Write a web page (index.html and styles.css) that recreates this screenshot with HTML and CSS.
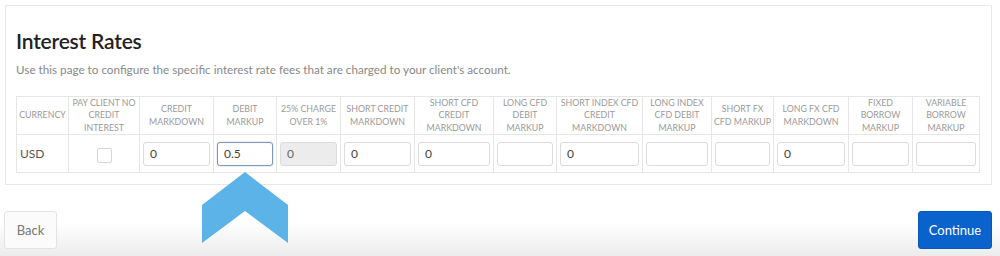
FILE: index.html
```html
<!DOCTYPE html>
<html>
<head>
<meta charset="utf-8">
<link rel="stylesheet" href="styles.css">
</head>
<body>
<div class="page">
  <section class="card">
    <h1 class="title">Interest Rates</h1>
    <p class="lead">Use this page to configure the specific interest rate fees that are charged to your client's account.</p>
    <table class="rates">
      <colgroup>
        <col class="w52"><col class="w71"><col class="w74"><col class="w63"><col class="w64"><col class="w74"><col class="w79"><col class="w63"><col class="w86"><col class="w69"><col class="w62"><col class="w75"><col class="w64"><col class="w67">
      </colgroup>
      <thead>
        <tr>
          <th>Currency</th>
          <th>Pay client no credit interest</th>
          <th>Credit markdown</th>
          <th>Debit markup</th>
          <th>25% charge over 1%</th>
          <th>Short credit markdown</th>
          <th>Short CFD credit markdown</th>
          <th>Long CFD debit markup</th>
          <th>Short index CFD credit markdown</th>
          <th>Long index CFD debit markup</th>
          <th>Short FX CFD markup</th>
          <th>Long FX CFD markdown</th>
          <th>Fixed borrow markup</th>
          <th>Variable borrow markup</th>
        </tr>
      </thead>
      <tbody>
        <tr>
          <td class="cur">USD</td>
          <td class="center"><span class="check"></span></td>
          <td><input class="field" value="0"></td>
          <td><input class="field focus" value="0.5"></td>
          <td><input class="field disabled" value="0" disabled></td>
          <td><input class="field" value="0"></td>
          <td><input class="field" value="0"></td>
          <td><input class="field" value=""></td>
          <td><input class="field" value="0"></td>
          <td><input class="field" value=""></td>
          <td><input class="field" value=""></td>
          <td><input class="field" value="0"></td>
          <td><input class="field" value=""></td>
          <td><input class="field" value=""></td>
        </tr>
      </tbody>
    </table>
  </section>
  <div class="actions">
    <button class="btn back">Back</button>
    <button class="btn primary">Continue</button>
  </div>
  <svg class="arrow" width="86" height="72" viewBox="0 0 86 72">
    <polygon points="0,33 43,0 86,33 86,71 43,39 0,71" fill="#5cb3e7"/>
  </svg>
</div>
</body>
</html>
```

FILE: styles.css
```css
* { box-sizing: border-box; }
html, body { margin: 0; padding: 0; }
body {
  width: 1000px;
  height: 256px;
  overflow: hidden;
  font-family: "Lato", "Liberation Sans", sans-serif;
  background: linear-gradient(to bottom, #ffffff 0px, #ffffff 222px, #ececec 256px);
}
.page {
  position: relative;
  padding: 5px 8px 0 5px;
}
.card {
  width: 987px;
  height: 180px;
  border: 1px solid #e8e8e8;
  background: #fff;
  padding: 22px 12px 0 10px;
}
.title {
  margin: 0;
  font-size: 21px;
  font-weight: 600;
  color: #222;
  line-height: 26px;
  letter-spacing: -0.2px;
}
.lead {
  margin: 7px 0 0 0;
  font-size: 11.7px;
  color: #888;
  line-height: 16px;
}
.rates {
  margin-top: 19px;
  width: 963px;
  table-layout: fixed;
  border-collapse: collapse;
}
.w52 { width: 52px; } .w71 { width: 71px; } .w74 { width: 74px; } .w63 { width: 63px; }
.w64 { width: 64px; } .w79 { width: 79px; } .w86 { width: 86px; } .w69 { width: 69px; }
.w62 { width: 62px; } .w75 { width: 75px; } .w67 { width: 67px; }
.rates th, .rates td {
  border: 1px solid #e6e6e6;
}
.rates th {
  height: 38px;
  padding: 0;
  font-size: 8.8px;
  line-height: 12.3px;
  font-weight: 400;
  color: #9a9a9a;
  text-transform: uppercase;
  text-align: center;
  vertical-align: middle;
}
.rates td {
  height: 38px;
  padding: 0 3px;
  vertical-align: middle;
}
.rates td.cur {
  font-size: 12px;
  color: #555;
  padding-left: 3px;
}
.rates td.center { text-align: center; }
.check {
  display: inline-block;
  width: 15px;
  height: 15px;
  border: 1px solid #d6d6d6;
  border-radius: 2px;
  vertical-align: middle;
  background: #fff;
}
.field {
  display: block;
  width: 100%;
  height: 24px;
  border: 1px solid #dcdcdc;
  border-radius: 3px;
  padding: 0 6px;
  font-family: "Lato", "Liberation Sans", sans-serif;
  font-size: 12px;
  color: #444;
  background: #fff;
  outline: none;
}
.field.focus {
  border-color: #7e98b5;
  box-shadow: 0 0 2px rgba(90, 130, 180, 0.4);
}
.field.disabled {
  background: #ececec;
  color: #666;
}
.actions {
  display: flex;
  justify-content: space-between;
  margin-top: 26px;
  margin-left: -1px;
}
.btn {
  height: 38px;
  border-radius: 3px;
  font-family: "Lato", "Liberation Sans", sans-serif;
  font-size: 13px;
  cursor: pointer;
}
.back {
  width: 53px;
  background: #fbfbfb;
  border: 1px solid #e3e3e3;
  color: #777;
}
.primary {
  width: 74px;
  background: #0a62cc;
  border: 1px solid #0a58b8;
  color: #fff;
}
.arrow {
  position: absolute;
  left: 202px;
  top: 172px;
}
```
